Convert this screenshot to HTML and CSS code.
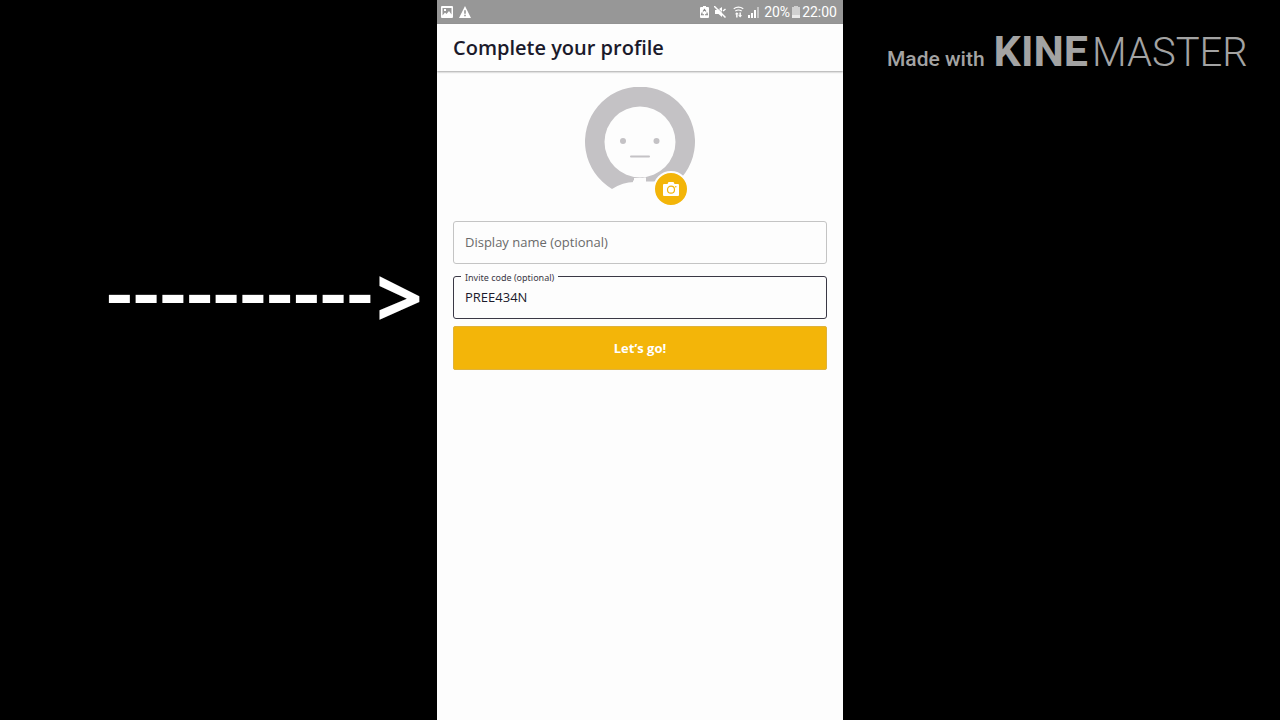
FILE: index.html
```html
<!DOCTYPE html>
<html lang="en">
<head>
<meta charset="utf-8">
<meta name="viewport" content="width=device-width, initial-scale=1">
<title>Complete your profile</title>
<link rel="stylesheet" href="styles.css">
</head>
<body>
<div class="stage">
  <aside class="side side-left">
    <div class="arrow"><span class="arrow-shaft">----------</span><span>&gt;</span></div>
  </aside>

  <main class="phone">
    <div class="status">
      <div class="status-group">
        <svg class="status-icon" viewBox="0 0 12 12"><path fill="#fff" fill-rule="evenodd" d="M1 0h10a1 1 0 0 1 1 1v10a1 1 0 0 1-1 1H1a1 1 0 0 1-1-1V1a1 1 0 0 1 1-1zM1.500 2v7.500l2.500-3 1.500 1.500 2.500-3 2.500 3.500V2zM3 3h2v2H3z"/></svg>
        <svg class="status-icon" viewBox="0 0 12 12"><path fill="#fff" fill-rule="evenodd" d="M6 0l6 12H0zM5.200 4.200v3.500h1.600V4.200zM5.200 8.800v1.500h1.600V8.800z"/></svg>
      </div>
      <div class="status-group status-right">
        <svg class="icon-save" viewBox="0 0 9 12"><path fill="#fff" d="M3 0h3v1h2a1 1 0 0 1 1 1v9a1 1 0 0 1-1 1H1a1 1 0 0 1-1-1V2a1 1 0 0 1 1-1h2z"/><path fill="none" stroke="#888" stroke-width="1.100" d="M3 5.500l1.500-2 1.500 2M6.800 6.500l.6 2.300H5M2.200 6.500l-.7 2.300H4"/></svg>
        <svg class="status-icon" viewBox="0 0 12 12"><path fill="#fff" d="M1 4h2.500L8 1v10L4.500 8H1z"/><path stroke="#999" stroke-width="1" d="M1.500 0l10.500 10.500"/><path stroke="#fff" stroke-width="1.500" d="M0 0l11.500 11.500M9 5l2.500-2"/></svg>
        <svg class="icon-wifi" viewBox="0 0 12 12"><path fill="none" stroke="#fff" stroke-width="1.300" d="M.8 2.500Q6-1 11.200 2.500M2.500 5q3.500-2.400 7 0"/><path fill="#fff" d="M2 8.500l2.200-2.300 2.200 2.300H5V12H3.400V8.500zM5.600 9.500H7V6.500h1.600v3H10L7.800 12z"/></svg>
        <svg class="icon-signal" viewBox="0 0 12 12"><path fill="#fff" d="M0 9h2v3H0zM3 7h2v5H3zM6 4h2v8H6z"/><path fill="#fff" opacity=".45" d="M9 1h2v11H9z"/></svg>
        <span>20%</span>
        <svg class="icon-battery" viewBox="0 0 8 12"><path fill="#fff" opacity=".55" d="M2 0h4v1h2v8H0V1h2z"/><path fill="#fff" opacity=".8" d="M0 9h8v3H0z"/></svg>
        <span>22:00</span>
      </div>
    </div>

    <header class="header"><h1 class="title">Complete your profile</h1></header>

    <form class="form">
      <div class="avatar">
        <svg class="avatar-face" viewBox="0 0 110 110">
          <path fill="#c4c2c5" d="M27 102A55 55 0 1 1 83 102L76 94.500H61V91H49V95Q38 95 27 102z"/>
          <circle cx="55" cy="55" r="35.500" fill="#fdfdfd"/>
          <path fill="#fdfdfd" d="M58.500 90.500h2.500v5h-2.500zM48 93.500h13v4H48z"/>
          <circle cx="38" cy="54" r="3" fill="#c4c2c5"/>
          <circle cx="71.500" cy="54" r="3" fill="#c4c2c5"/>
          <path stroke="#c4c2c5" stroke-width="2" stroke-linecap="round" d="M46 69.500h18"/>
        </svg>
        <button class="camera" type="button" aria-label="Add photo">
          <svg class="camera-icon" viewBox="0 0 16 14"><path fill="#fff" d="M1 2h3.500L5.500 0h5l1 2H15a1 1 0 0 1 1 1v10a1 1 0 0 1-1 1H1a1 1 0 0 1-1-1V3a1 1 0 0 1 1-1z"/><circle cx="8" cy="7.700" r="3.500" fill="none" stroke="#f3b509" stroke-width="1.200"/><circle cx="12.800" cy="4.800" r=".8" fill="#f3b509"/></svg>
        </button>
      </div>

      <input class="input" type="text" aria-label="Display name (optional)" placeholder="Display name (optional)">
      <div class="field">
        <label class="label" for="invite">Invite code (optional)</label>
        <input class="input input-active" id="invite" type="text" value="PREE434N">
      </div>
      <button class="submit" type="submit">Let’s go!</button>
    </form>
  </main>

  <aside class="side side-right">
    <div class="mark">
      <span class="mark-made">Made with</span>
      <span class="mark-logo"><b class="mark-kine">KINE</b><span class="mark-master">MASTER</span></span>
    </div>
  </aside>
</div>
</body>
</html>
```
FILE: styles.css
```css
* { box-sizing: border-box; }

body {
  margin: 0;
  background: #000;
  font-family: "Open Sans", "Noto Sans", sans-serif;
}

.stage {
  display: grid;
  grid-template-columns: minmax(0, 1fr) minmax(0, 406px) minmax(0, 1fr);
  min-height: 100vh;
}

.side { display: flex; justify-content: flex-end; }
.side-left { padding: 248px 14px 0 0; }
.side-right { justify-content: flex-start; padding: 26px 0 0 44px; }

.arrow {
  display: flex;
  align-items: center;
  align-self: flex-start;
  gap: 3px;
  color: #fff;
  font: 700 82px/96px "Open Sans", "Noto Sans", sans-serif;
  white-space: nowrap;
}
.arrow-shaft { font-size: 83px; font-weight: 600; line-height: 80px; padding-bottom: 14px; }

.phone { background: #fdfdfd; }

.status {
  display: flex;
  justify-content: space-between;
  align-items: center;
  height: 24px;
  padding: 0 6px 0 4px;
  background: #979797;
  color: #fff;
  font: 14px/24px Roboto, sans-serif;
}
.status-group { display: flex; align-items: center; gap: 6px; }
.status-right { gap: 2px; }
.status-icon { width: 12px; height: 12px; }
.icon-save { width: 9px; height: 12px; margin-right: 3px; }
.icon-wifi { width: 11px; height: 12px; margin: 0 2px 0 5px; }
.icon-signal { width: 12px; height: 12px; margin-right: 2px; }
.icon-battery { width: 8px; height: 12px; }

.header {
  height: 47px;
  padding: 0 16px;
  box-shadow: 0 1px 2px rgba(0, 0, 0, 0.35);
}
.title {
  margin: 0;
  color: #1b1a2b;
  font-size: 20px;
  font-weight: 600;
  line-height: 47px;
}

.form {
  display: flex;
  flex-direction: column;
  padding: 16px 16px 0;
}

.avatar {
  position: relative;
  align-self: center;
  width: 110px;
  height: 118px;
  margin-bottom: 16px;
}
.avatar-face { display: block; width: 110px; height: 110px; }
.camera {
  position: absolute;
  right: 6px;
  bottom: -2px;
  display: grid;
  place-items: center;
  width: 36px;
  height: 36px;
  padding: 0;
  border: 2px solid #fdfdfd;
  border-radius: 50%;
  background: #f3b509;
}
.camera-icon { width: 16px; height: 14px; }

.input {
  display: block;
  width: 100%;
  height: 43px;
  padding: 0 11px 2px;
  border: 1px solid #c4c4c4;
  border-radius: 3px;
  background: transparent;
  color: #1b1a2b;
  font: 13px/20px "Open Sans", "Noto Sans", sans-serif;
}
.input::placeholder { color: #6a6a6a; opacity: 1; }
.input-active { border-color: #3a3845; }

.field { position: relative; margin-top: 12px; }
.label {
  position: absolute;
  top: -5px;
  left: 8px;
  padding: 0 4px;
  background: #fdfdfd;
  color: #3a3845;
  font: 9px/14px "Noto Sans", "Open Sans", sans-serif;
}

.submit {
  height: 44px;
  margin-top: 7px;
  border: 1px solid #dfb23c;
  border-radius: 2px;
  background: #f3b509;
  color: #fff;
  font: bold 13px/20px "Open Sans", "Noto Sans", sans-serif;
}

.mark {
  display: flex;
  align-items: baseline;
  gap: 9px;
  color: #a3a3a3;
  font-family: Roboto, sans-serif;
  white-space: nowrap;
}
.mark-made { font-size: 21px; font-weight: 500; }
.mark-logo { display: flex; align-items: baseline; gap: 4px; line-height: 50px; }
.mark-kine { font-size: 43px; font-weight: 700; }
.mark-master { font-size: 40px; font-weight: 300; }
```
